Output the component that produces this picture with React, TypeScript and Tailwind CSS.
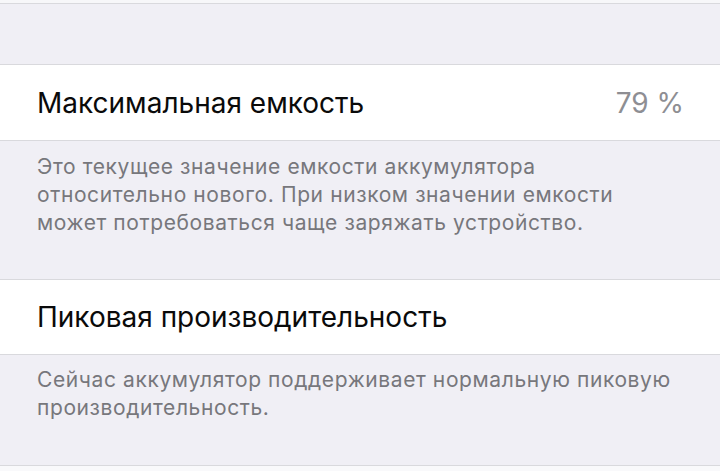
export default function App() {
  return (
    <div className="w-[720px] h-[471px] overflow-hidden bg-[#f0eff5] flex flex-col" style={{ fontFamily: 'Inter, "Noto Sans", sans-serif' }}>
      <div className="h-[3px] bg-[#f7f7f9] border-b border-[#d9d9dd] box-content shrink-0" />
      <div className="h-[60px] shrink-0" />
      <div className="h-[75px] shrink-0 bg-white border-y border-[#d9d9dd] box-content flex items-center justify-between pl-[37px] pr-[36px]">
        <span className="text-[28px] text-[#0a0a0a]">Максимальная емкость</span>
        <span className="text-[28px] text-[#8e8e93]">79 %</span>
      </div>
      <div className="h-[138px] shrink-0 pl-[37px] pt-[12px] text-[21px] leading-[28px] tracking-[0.6px] text-[#77777c]">
        <p>Это текущее значение емкости аккумулятора</p>
        <p>относительно нового. При низком значении емкости</p>
        <p>может потребоваться чаще заряжать устройство.</p>
      </div>
      <div className="h-[74px] shrink-0 bg-white border-y border-[#d9d9dd] box-content flex items-center pl-[37px]">
        <span className="text-[28px] text-[#0a0a0a]">Пиковая производительность</span>
      </div>
      <div className="h-[110px] shrink-0 pl-[37px] pt-[11px] text-[21px] leading-[28px] tracking-[0.6px] text-[#77777c]">
        <p>Сейчас аккумулятор поддерживает нормальную пиковую</p>
        <p>производительность.</p>
      </div>
      <div className="flex-1 bg-[#f9f9fb] border-t border-[#d9d9dd]" />
    </div>
  );
}
